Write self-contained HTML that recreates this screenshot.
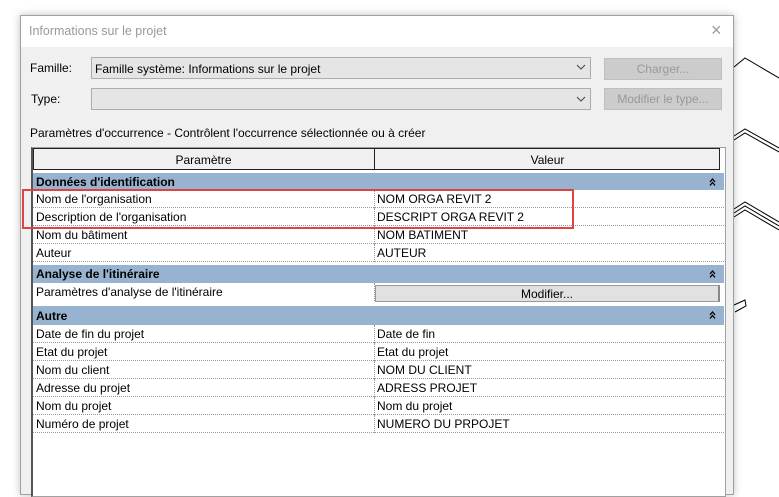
<!DOCTYPE html>
<html><head><meta charset="utf-8"><style>
*{margin:0;padding:0;box-sizing:border-box}
body{width:779px;height:488px;background:#fff;position:relative;overflow:hidden;font-family:"Liberation Sans",sans-serif;font-size:12px;color:#000}
.a{position:absolute}
.dlg{left:20px;top:15px;width:714px;height:480px;background:#f0f0f0;border:1px solid #a0a0a0;box-shadow:0 0 8px rgba(0,0,0,.25)}
.tb{left:0;top:0;width:712px;height:31px;background:#fff}
.cb{background:#e5e5e5;border:1px solid #adadad}
.btn{background:#cccccc;border:1px solid #bfbfbf;color:#999;text-align:center;line-height:20px}
.row{position:absolute;left:33px;width:691px;height:18px;background:#fff;border-bottom:1px dotted #999;line-height:19px}
.row span{position:absolute;left:3px;white-space:nowrap}
.row .v{left:344px}
.row:before{content:"";position:absolute;left:341px;top:0;height:18px;border-left:1px dotted #999}
.grp{position:absolute;left:33px;width:691px;background:#98b3cf;font-weight:bold;line-height:19px;padding-left:3px}
.grp svg{position:absolute;right:8px;top:5px}
</style></head><body>
<svg class="a" style="left:730px;top:0" width="49" height="488">
<polyline points="4,67 15,58 49,78" fill="none" stroke="#000"/>
<polyline points="4,136 15,129 49,148" fill="none" stroke="#000"/>
<polyline points="4,140 15,133 49,152" fill="none" stroke="#000"/>
<polyline points="4,209 15,202 49,222" fill="none" stroke="#000"/>
<polyline points="4,213 15,206 49,226" fill="none" stroke="#000"/>
<polyline points="4,217 15,210 49,230" fill="none" stroke="#000"/>
<polyline points="4,305 15,300 16,306 5,312" fill="none" stroke="#000"/>
</svg>
<div class="a dlg">
<div class="a tb"></div>
<div class="a" style="left:8px;top:8px;color:#999;font-size:12.5px">Informations sur le projet</div>
<div class="a" style="left:690px;top:4px;color:#999;font-size:18px">×</div>
</div>
<div class="a" style="left:30px;top:61px">Famille:</div>
<div class="a" style="left:31px;top:92px">Type:</div>
<div class="a cb" style="left:91px;top:57px;width:500px;height:22px;padding:4px 3px">Famille système: Informations sur le projet</div>
<div class="a cb" style="left:91px;top:88px;width:500px;height:22px"></div>
<svg class="a" style="left:576px;top:64px" width="10" height="6"><polyline points="1,1 5,5 9,1" fill="none" stroke="#444"/></svg>
<svg class="a" style="left:576px;top:96px" width="10" height="6"><polyline points="1,1 5,5 9,1" fill="none" stroke="#444"/></svg>
<div class="a btn" style="left:604px;top:58px;width:118px;height:22px">Charger...</div>
<div class="a btn" style="left:604px;top:88px;width:118px;height:22px">Modifier le type...</div>
<div class="a" style="left:30px;top:126px">Paramètres d'occurrence - Contrôlent l'occurrence sélectionnée ou à créer</div>
<div class="a" style="left:31px;top:147px;width:695px;height:350px;background:#fff;border:1px solid #a0a0a0;border-left:2px solid #555"></div>
<div class="a" style="left:33px;top:148px;width:687px;height:22px;background:#f0f0f0;border:1px solid #222"></div>
<div class="a" style="left:374px;top:148px;width:1px;height:22px;background:#222"></div>
<div class="a" style="left:33px;top:153px;width:341px;text-align:center">Paramètre</div>
<div class="a" style="left:375px;top:153px;width:345px;text-align:center">Valeur</div>
<div class="grp" style="top:173px;height:17px">Données d'identification<svg width="7" height="8"><polyline points="1,4 3.5,1 6,4 M1,7" fill="none" stroke="#000" stroke-width="1.3"/><polyline points="1,7.5 3.5,4.5 6,7.5" fill="none" stroke="#000" stroke-width="1.3"/></svg></div>
<div class="row" style="top:190px"><span>Nom de l'organisation</span><span class="v">NOM ORGA REVIT 2</span></div>
<div class="row" style="top:208px"><span>Description de l'organisation</span><span class="v">DESCRIPT ORGA REVIT 2</span></div>
<div class="row" style="top:226px"><span>Nom du bâtiment</span><span class="v">NOM BATIMENT</span></div>
<div class="row" style="top:244px"><span>Auteur</span><span class="v">AUTEUR</span></div>
<div class="grp" style="top:265px;height:18px">Analyse de l'itinéraire<svg width="7" height="8"><polyline points="1,4 3.5,1 6,4" fill="none" stroke="#000" stroke-width="1.3"/><polyline points="1,7.5 3.5,4.5 6,7.5" fill="none" stroke="#000" stroke-width="1.3"/></svg></div>
<div class="row" style="top:283px;border-bottom:none"><span>Paramètres d'analyse de l'itinéraire</span></div>
<div class="a" style="left:375px;top:285px;width:345px;height:17px;background:#e1e1e1;border:1px solid #999;border-right:2px solid #888;text-align:center;line-height:16px">Modifier...</div>
<div class="grp" style="top:306px;height:19px;line-height:20px">Autre<svg width="7" height="8"><polyline points="1,4 3.5,1 6,4" fill="none" stroke="#000" stroke-width="1.3"/><polyline points="1,7.5 3.5,4.5 6,7.5" fill="none" stroke="#000" stroke-width="1.3"/></svg></div>
<div class="row" style="top:325px"><span>Date de fin du projet</span><span class="v">Date de fin</span></div>
<div class="row" style="top:343px"><span>Etat du projet</span><span class="v">Etat du projet</span></div>
<div class="row" style="top:361px"><span>Nom du client</span><span class="v">NOM DU CLIENT</span></div>
<div class="row" style="top:379px"><span>Adresse du projet</span><span class="v">ADRESS PROJET</span></div>
<div class="row" style="top:397px"><span>Nom du projet</span><span class="v">Nom du projet</span></div>
<div class="row" style="top:415px"><span>Numéro de projet</span><span class="v">NUMERO DU PRPOJET</span></div>
<div class="a" style="left:22px;top:189px;width:552px;height:40px;border:2px solid #e04343"></div>
</body></html>
